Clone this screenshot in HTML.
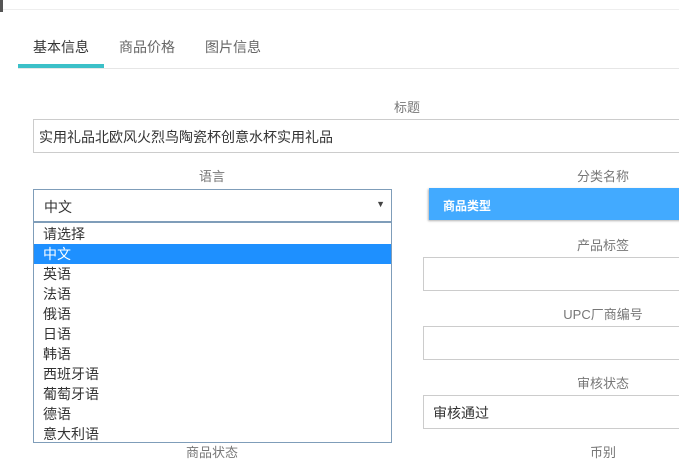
<!DOCTYPE html>
<html><head><meta charset="utf-8"><style>
*{margin:0;padding:0;box-sizing:border-box}
body{width:679px;height:457px;overflow:hidden;background:#fff;font-family:"Liberation Sans","Noto Sans CJK SC",sans-serif;color:#333;position:relative;font-size:13px}
.a{position:absolute}
.lbl{position:absolute;color:#777;font-size:13px;text-align:center;line-height:16px}
.inp{position:absolute;border:1px solid #ccc;background:#fff}
</style></head><body>
<div class="a" style="left:0;top:9px;width:679px;height:1px;background:#eee"></div>
<div class="a" style="left:0;top:0;width:3px;height:12px;background:#555"></div>
<div class="a" style="left:33px;top:37px;font-size:14px;color:#333">基本信息</div>
<div class="a" style="left:119px;top:37px;font-size:14px;color:#666">商品价格</div>
<div class="a" style="left:205px;top:37px;font-size:14px;color:#666">图片信息</div>
<div class="a" style="left:18px;top:68px;width:661px;height:1px;background:#e6e6e6"></div>
<div class="a" style="left:18px;top:64px;width:86px;height:4px;background:#3bc0c8"></div>
<div class="lbl" style="left:367px;top:100px;width:80px">标题</div>
<div class="inp" style="left:33px;top:119px;width:660px;height:34px;padding:7px 0 0 5px;color:#333;font-size:14px">实用礼品北欧风火烈鸟陶瓷杯创意水杯实用礼品</div>
<div class="lbl" style="left:172px;top:169px;width:80px">语言</div>
<div class="inp" style="left:33px;top:189px;width:359px;height:33px;border-color:#7f9db9;padding:7px 0 0 10px;font-size:14px">中文<span class="a" style="right:6px;top:9px;font-size:9px;color:#444">▼</span></div>
<div class="inp" style="left:33px;top:222px;width:359px;height:221px;border-color:#7f9db9;line-height:20px;color:#333;font-size:14px;padding-top:1px">
<div style="padding-left:9px">请选择</div>
<div style="padding-left:9px;background:#1e90ff;color:#fff">中文</div>
<div style="padding-left:9px">英语</div>
<div style="padding-left:9px">法语</div>
<div style="padding-left:9px">俄语</div>
<div style="padding-left:9px">日语</div>
<div style="padding-left:9px">韩语</div>
<div style="padding-left:9px">西班牙语</div>
<div style="padding-left:9px">葡萄牙语</div>
<div style="padding-left:9px">德语</div>
<div style="padding-left:9px">意大利语</div>
</div>
<div class="lbl" style="left:172px;top:445px;width:80px">商品状态</div>
<div class="lbl" style="left:563px;top:169px;width:80px">分类名称</div>
<div class="a" style="left:429px;top:188px;width:260px;height:32px;background:#42aaff;box-shadow:-1px 1px 2px rgba(0,0,0,.3);color:#fff;font-weight:bold;padding:9px 0 0 14px;font-size:12px">商品类型</div>
<div class="lbl" style="left:563px;top:238px;width:80px">产品标签</div>
<div class="inp" style="left:423px;top:257px;width:270px;height:34px"></div>
<div class="lbl" style="left:553px;top:307px;width:100px">UPC厂商编号</div>
<div class="inp" style="left:423px;top:326px;width:270px;height:34px"></div>
<div class="lbl" style="left:563px;top:376px;width:80px">审核状态</div>
<div class="inp" style="left:423px;top:395px;width:270px;height:34px;padding:7px 0 0 9px;font-size:14px">审核通过</div>
<div class="lbl" style="left:563px;top:445px;width:80px">币别</div>
</body></html>
